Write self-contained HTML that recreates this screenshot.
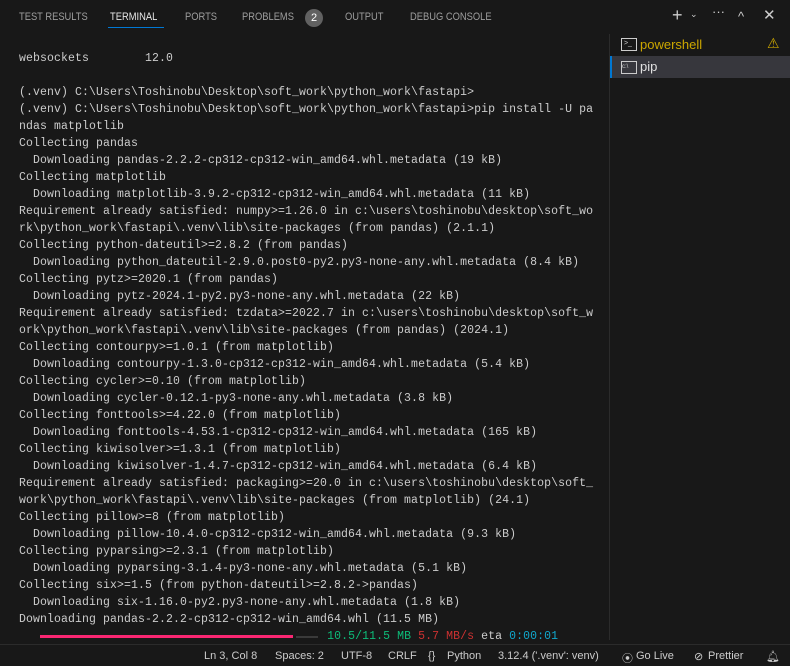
<!DOCTYPE html>
<html><head><meta charset="utf-8"><style>
body{margin:0;width:790px;height:665px;background:#181818;overflow:hidden;position:relative;font-family:"Liberation Sans",sans-serif;}
.tab{position:absolute;top:11px;font-size:11px;color:#9d9d9d;white-space:nowrap;transform:scaleX(0.85);transform-origin:0 0}
pre{position:absolute;left:19px;top:50px;margin:0;font-family:"Liberation Mono",monospace;font-size:11.5px;letter-spacing:0.1px;line-height:17px;color:#cccccc;}
.sb{position:absolute;top:650px;font-size:11px;color:#cccccc;white-space:nowrap}
</style></head><body>
<div class="tab" style="left:19px">TEST RESULTS</div>
<div class="tab" style="left:110px;color:#e7e7e7">TERMINAL</div>
<div style="position:absolute;left:108px;top:27px;width:56px;height:1px;background:#0078d4"></div>
<div class="tab" style="left:185px">PORTS</div>
<div class="tab" style="left:242px">PROBLEMS</div>
<div style="position:absolute;left:305px;top:9px;width:18px;height:18px;border-radius:9px;background:#616161;color:#fff;font-size:11px;text-align:center;line-height:18px">2</div>
<div class="tab" style="left:345px">OUTPUT</div>
<div class="tab" style="left:410px">DEBUG CONSOLE</div>
<div style="position:absolute;left:672px;top:5px;color:#ccc;font-size:18px">+</div>
<div style="position:absolute;left:690px;top:9px;color:#ccc;font-size:9px">&#8964;</div>
<div style="position:absolute;left:712px;top:4px;color:#ccc;font-size:13px">···</div>
<div style="position:absolute;left:738px;top:9px;color:#ccc;font-size:13px">^</div>
<div style="position:absolute;left:763px;top:6px;color:#ccc;font-size:15px">✕</div>
<div style="position:absolute;left:609px;top:34px;width:1px;height:606px;background:#2b2b2b"></div>
<div style="position:absolute;left:610px;top:56px;width:180px;height:22px;background:#37373d"></div>
<div style="position:absolute;left:610px;top:56px;width:2px;height:22px;background:#0078d4"></div>
<div style="position:absolute;left:621px;top:38px;width:14px;height:11px;border:1px solid #ccc;font-size:7px;color:#ccc;line-height:10px">&nbsp;&gt;_</div>
<div style="position:absolute;left:640px;top:37px;font-size:13px;color:#cca700">powershell</div>
<div style="position:absolute;left:767px;top:35px;font-size:14px;color:#cca700">⚠</div>
<div style="position:absolute;left:621px;top:61px;width:14px;height:11px;border:1px solid #ccc;font-size:6px;color:#ccc;line-height:11px">c:\</div>
<div style="position:absolute;left:640px;top:59px;font-size:13px;color:#e0e0e0">pip</div>
<pre>websockets        12.0

(.venv) C:\Users\Toshinobu\Desktop\soft_work\python_work\fastapi>
(.venv) C:\Users\Toshinobu\Desktop\soft_work\python_work\fastapi>pip install -U pa
ndas matplotlib
Collecting pandas
  Downloading pandas-2.2.2-cp312-cp312-win_amd64.whl.metadata (19 kB)
Collecting matplotlib
  Downloading matplotlib-3.9.2-cp312-cp312-win_amd64.whl.metadata (11 kB)
Requirement already satisfied: numpy>=1.26.0 in c:\users\toshinobu\desktop\soft_wo
rk\python_work\fastapi\.venv\lib\site-packages (from pandas) (2.1.1)
Collecting python-dateutil>=2.8.2 (from pandas)
  Downloading python_dateutil-2.9.0.post0-py2.py3-none-any.whl.metadata (8.4 kB)
Collecting pytz>=2020.1 (from pandas)
  Downloading pytz-2024.1-py2.py3-none-any.whl.metadata (22 kB)
Requirement already satisfied: tzdata>=2022.7 in c:\users\toshinobu\desktop\soft_w
ork\python_work\fastapi\.venv\lib\site-packages (from pandas) (2024.1)
Collecting contourpy>=1.0.1 (from matplotlib)
  Downloading contourpy-1.3.0-cp312-cp312-win_amd64.whl.metadata (5.4 kB)
Collecting cycler>=0.10 (from matplotlib)
  Downloading cycler-0.12.1-py3-none-any.whl.metadata (3.8 kB)
Collecting fonttools>=4.22.0 (from matplotlib)
  Downloading fonttools-4.53.1-cp312-cp312-win_amd64.whl.metadata (165 kB)
Collecting kiwisolver>=1.3.1 (from matplotlib)
  Downloading kiwisolver-1.4.7-cp312-cp312-win_amd64.whl.metadata (6.4 kB)
Requirement already satisfied: packaging>=20.0 in c:\users\toshinobu\desktop\soft_
work\python_work\fastapi\.venv\lib\site-packages (from matplotlib) (24.1)
Collecting pillow>=8 (from matplotlib)
  Downloading pillow-10.4.0-cp312-cp312-win_amd64.whl.metadata (9.3 kB)
Collecting pyparsing>=2.3.1 (from matplotlib)
  Downloading pyparsing-3.1.4-py3-none-any.whl.metadata (5.1 kB)
Collecting six>=1.5 (from python-dateutil>=2.8.2->pandas)
  Downloading six-1.16.0-py2.py3-none-any.whl.metadata (1.8 kB)
Downloading pandas-2.2.2-cp312-cp312-win_amd64.whl (11.5 MB)
                                            <span style="color:#0dbc79">10.5/11.5 MB</span> <span style="color:#cd3131">5.7 MB/s</span> eta <span style="color:#11a8cd">0:00:01</span></pre>
<div style="position:absolute;left:40px;top:635px;width:253px;height:3px;background:#f92672"></div>
<div style="position:absolute;left:296px;top:636px;width:22px;height:2px;background:#3a3a3a"></div>
<div style="position:absolute;left:0;top:644px;width:790px;height:1px;background:#2b2b2b"></div>
<div class="sb" style="left:204px">Ln 3, Col 8</div>
<div class="sb" style="left:275px">Spaces: 2</div>
<div class="sb" style="left:341px">UTF-8</div>
<div class="sb" style="left:388px">CRLF</div>
<div class="sb" style="left:428px">{&#8203;}</div>
<div class="sb" style="left:447px">Python</div>
<div class="sb" style="left:498px">3.12.4 ('.venv': venv)</div>
<div class="sb" style="left:622px">⦿</div>
<div class="sb" style="left:636px">Go Live</div>
<div class="sb" style="left:694px">⊘</div>
<div class="sb" style="left:708px">Prettier</div>
<div class="sb" style="left:766px">🔔︎</div>
</body></html>
